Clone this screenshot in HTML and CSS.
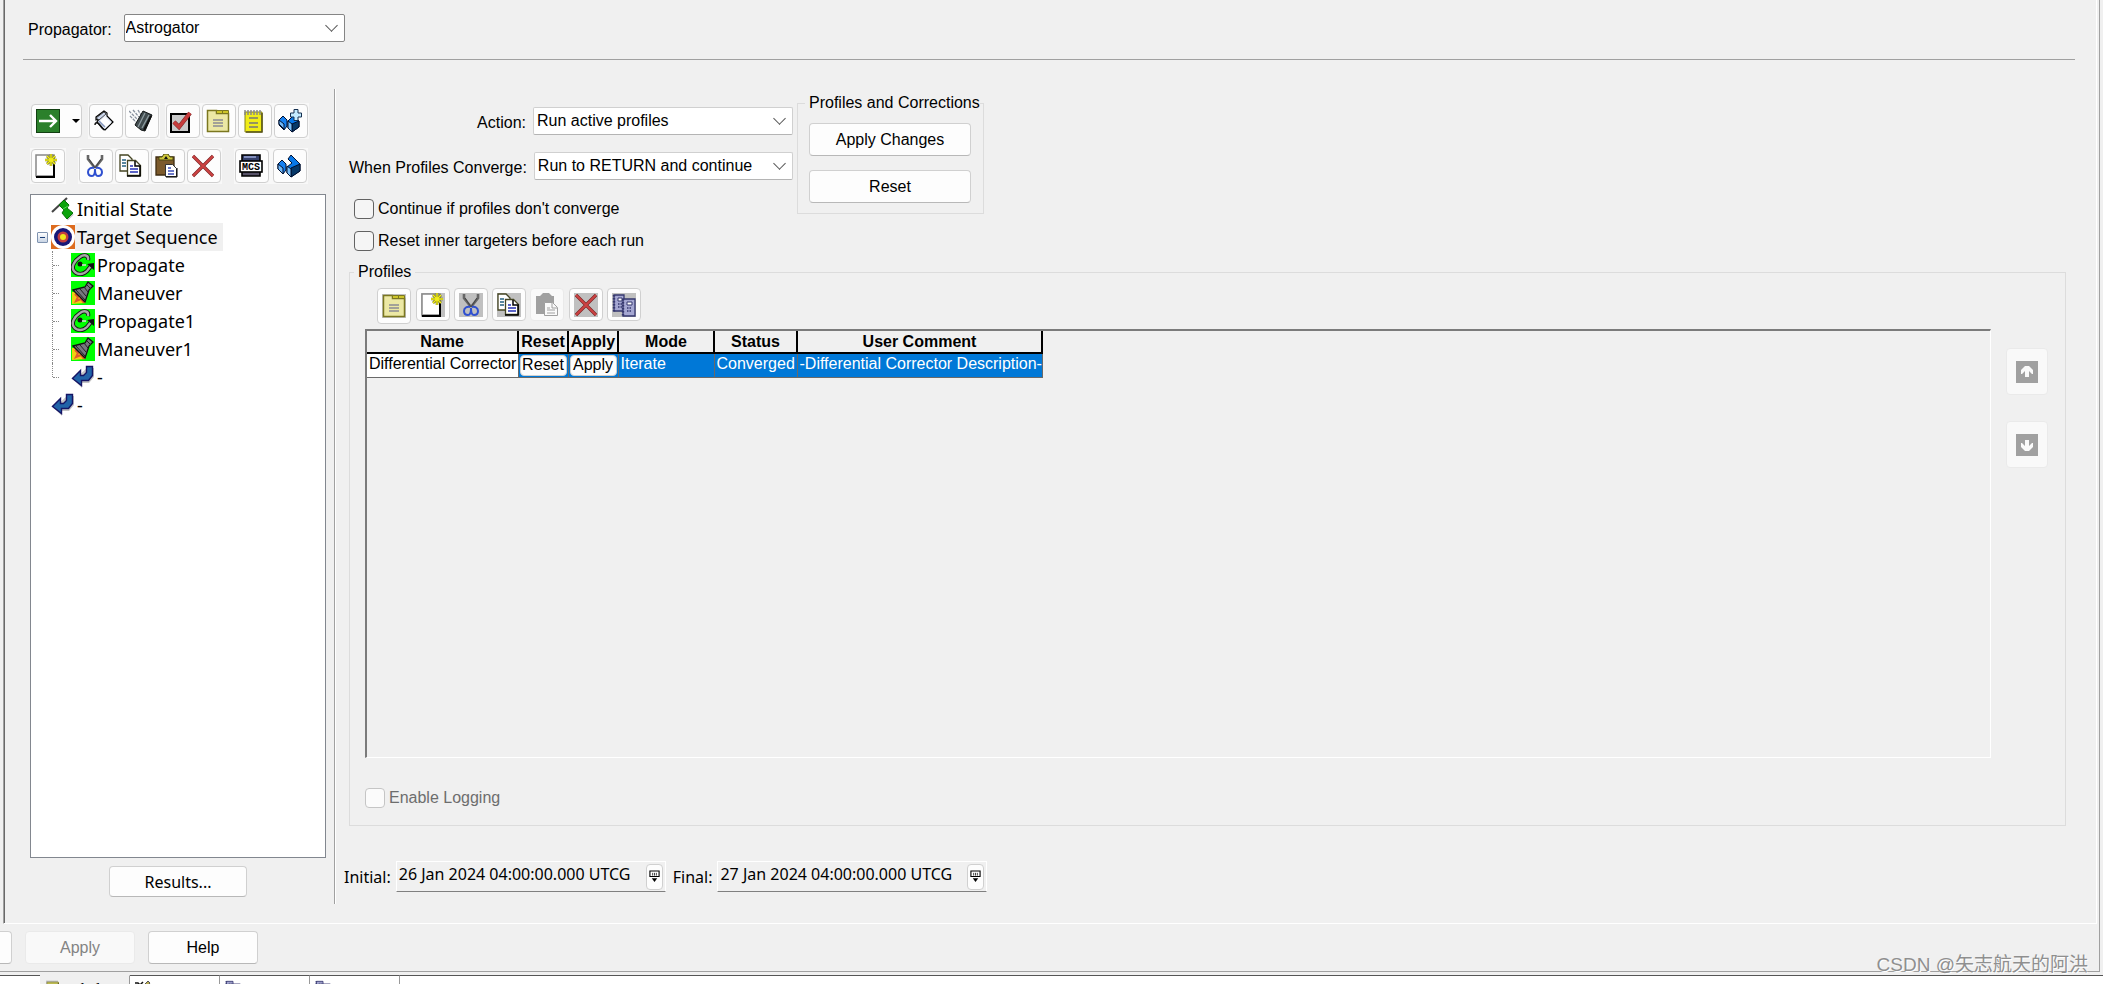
FILE: index.html
```html
<!DOCTYPE html>
<html lang="en">
<head>
  <meta charset="UTF-8">
  <meta name="viewport" content="width=device-width, initial-scale=1.0">
  <title>Satellite Properties - Astrogator</title>
  <link rel="stylesheet" href="styles.css">
</head>
<body>
  <!-- icons -->
  <svg class="defs" aria-hidden="true">
    <symbol id="i-run" viewBox="0 0 24 24">
      <rect x="0.5" y="0.5" width="23" height="23" fill="#2b802b" stroke="#123f12"/>
      <path d="M3 12h17M14 6l6 6-6 6" fill="none" stroke="#fff" stroke-width="2.4"/>
    </symbol>
    <symbol id="i-scroll" viewBox="0 0 24 24">
      <path d="M3 8l8-6 3 2v3l6 6-8 8-3-2-5-6 2-3-3 1z" fill="#e6ecf7" stroke="#000" stroke-width="1.2"/>
      <path d="M7 12l5-4 6 6-6 5z" fill="#fff"/>
      <path d="M3 9l8-6 2 2-7 6z" fill="#c9d4ea" stroke="#222" stroke-width="0.8"/>
      <path d="M6 12l6 6" stroke="#8294ba" stroke-width="1.5"/>
      <path d="M2 16c0-3 3-3 5 0l4 5" fill="none" stroke="#111" stroke-width="1.4"/>
    </symbol>
    <symbol id="i-flush" viewBox="0 0 24 24">
      <path d="M0 2l8 8M4 1l6 7M9 1l3 5M1 7l6 6" stroke="#8a93a0" stroke-width="1.3" stroke-dasharray="3 1"/>
      <path d="M14 2l9 4-7 16-4-1-6-5z" fill="#414b4e" stroke="#101414"/>
      <path d="M16 4L9 18M20 6l-7 13" stroke="#8d9b9f" stroke-width="1.3"/>
      <path d="M22 7l-7 14" stroke="#111" stroke-width="2"/>
    </symbol>
    <symbol id="i-check" viewBox="0 0 24 24">
      <rect x="1" y="5" width="18" height="18" fill="#c9c9c9" stroke="#000" stroke-width="2"/>
      <path d="M4 13l5 5L20 4" fill="none" stroke="#7c2a2a" stroke-width="4.4"/>
      <path d="M4 13l5 5L20 4" fill="none" stroke="#c73c3c" stroke-width="3.2"/>
    </symbol>
    <symbol id="i-tab" viewBox="0 0 24 24">
      <path d="M1.5 1.5h9v3h12v18h-21z" fill="#ece8a4" stroke="#7b7720" stroke-width="1.5"/>
      <path d="M10.5 1.5h6v3h-6zM16.5 1.5h6v3h-6z" fill="#cdc52a" stroke="#7b7720"/>
      <path d="M7 11h10M7 14h10M7 17h10" stroke="#8b8b94" stroke-width="1.3"/>
    </symbol>
    <symbol id="i-note" viewBox="0 0 24 24">
      <path d="M3 3h17v20H3z" fill="#f0ec18" stroke="#85821a"/>
      <path d="M20 4v19H4" fill="none" stroke="#55531a" stroke-width="1.5"/>
      <path d="M3 1v5M6 1v5M9 1v5M12 1v5M15 1v5M18 1v5" stroke="#888" stroke-width="1.5"/>
      <path d="M7 9h9M7 14h9M7 18h9" stroke="#777" stroke-width="1.5"/>
    </symbol>
    <symbol id="i-cubes" viewBox="0 0 24 24">
      <path d="M1 10l4-4 4 4v6l-3 4-5-5z" fill="#1680f0" stroke="#001030"/>
      <path d="M1 10l5 4v6l-5-5z" fill="#70b8f8" stroke="#001030"/>
      <path d="M14 1l9 9v7l-9 6-4-4v-6l5-4-4-4z" fill="#0878e8" stroke="#001030"/>
      <path d="M14 14l9-4v7l-9 6z" fill="#063868" stroke="#001030"/>
      <path d="M10 12l4 3v8l-4-4z" fill="#78bef8" stroke="#001030"/>
    </symbol>
    <symbol id="i-cubes-add" viewBox="0 0 24 24">
      <path d="M1 11l4-4 4 4v6l-3 4-5-5z" fill="#1680f0" stroke="#001030"/>
      <path d="M1 11l5 4v5l-5-5z" fill="#70b8f8" stroke="#001030"/>
      <path d="M10 12l5-5 6 5v6l-7 5-4-4z" fill="#0878e8" stroke="#001030"/>
      <path d="M14 15l7-3v6l-7 5z" fill="#063868" stroke="#001030"/>
      <path d="M10 12l4 3v8l-4-4z" fill="#78bef8" stroke="#001030"/>
      <path d="M16 0.5h4v3.500h3.500v4H20v3.500h-4V8h-3.500V4H16z" fill="#c4ecff" stroke="#153050"/>
    </symbol>
    <symbol id="i-new" viewBox="0 0 24 24">
      <path d="M1 1h18v21H1z" fill="#fff" stroke="#888" stroke-width="1.5"/>
      <path d="M19 8v15H1" fill="none" stroke="#000" stroke-width="2"/>
      <path d="M16 0v12M10 6h12M12 2l8 8M20 2l-8 8" stroke="#77751a" stroke-width="2.6"/>
      <path d="M16 0v12M10 6h12M12 2l8 8M20 2l-8 8" stroke="#f2ee1a" stroke-width="1.4"/>
    </symbol>
    <symbol id="i-cut" viewBox="0 0 24 24">
      <path d="M5 1v4l7 9M19 1v4l-7 9" fill="none" stroke="#666" stroke-width="2.6"/>
      <path d="M6 5l6 9M18 5l-6 9" stroke="#444"/>
      <path d="M11 14c-3-1-6 1-6 4s2 4 4 4 3-3 3-7c0 4 1 7 3 7s4-1 4-4-3-5-6-4" fill="none" stroke="#2f50d0" stroke-width="2"/>
    </symbol>
    <symbol id="i-copy" viewBox="0 0 24 24">
      <path d="M1 1h8l4 4v12H1z" fill="#fff" stroke="#444422" stroke-width="1.3"/>
      <path d="M3 6h4M3 9h4M3 12h4" stroke="#256080" stroke-width="1.3"/>
      <path d="M8.5 6.5h8l5 5v10h-13z" fill="#fff" stroke="#444422" stroke-width="1.3"/>
      <path d="M16 7v5h5v10H8" fill="none" stroke="#000" stroke-width="1.5"/>
      <path d="M11 12h3M11 15h8M11 18h8" stroke="#2431b4" stroke-width="1.3"/>
    </symbol>
    <symbol id="i-paste" viewBox="0 0 24 24">
      <path d="M1 3h18v18H1z" fill="#7c5a2c" stroke="#3f2d12" stroke-width="1.3"/>
      <path d="M4 6V3h3l2-3h4l2 3h3v3z" fill="#cfc83c" stroke="#4a4712"/>
      <path d="M9 5h4l-2-3z" fill="#111"/>
      <path d="M10.5 10.5h7l4 4v8h-11z" fill="#fff" stroke="#333"/>
      <path d="M22 14v9H11" fill="none" stroke="#000"/>
      <path d="M13 14h3M13 17h6M13 20h6" stroke="#3c4db8" stroke-width="1.3"/>
    </symbol>
    <symbol id="i-paste-off" viewBox="0 0 24 24">
      <path d="M1 3h4l3-3h6l3 3h2v18H1z" fill="#a0a0a0"/>
      <path d="M9.5 9.500h8l5 5v8h-13z" fill="#fafafa" stroke="#a0a0a0"/>
      <path d="M17 10v5h5M12 15h3M12 17h8M12 20h8" fill="none" stroke="#a0a0a0"/>
    </symbol>
    <symbol id="i-del" viewBox="0 0 24 24">
      <path d="M2 2l20 20M22 2L2 22" stroke="#722" stroke-width="3.2"/>
      <path d="M2 2l20 20M22 2L2 22" stroke="#cc4343" stroke-width="2.2"/>
    </symbol>
    <symbol id="i-mcs" viewBox="0 0 24 24">
      <path d="M3 1h18v7H3z" fill="#35406c" stroke="#000" stroke-width="1.6"/>
      <path d="M5 3h12" stroke="#9ba8d8" stroke-width="1.5"/>
      <path d="M3 17h18v5H3z" fill="#555066" stroke="#000" stroke-width="1.6"/>
      <rect x="1" y="7" width="22" height="11" fill="#fff" stroke="#000" stroke-width="1.6"/>
      <text x="12" y="16" text-anchor="middle" font-family="Liberation Mono, monospace" font-weight="700" font-size="10" fill="#000">MCS</text>
    </symbol>
    <symbol id="i-props" viewBox="0 0 24 24">
      <path d="M2 2h10v16H2z" fill="#a5a7d2" stroke="#35376e" stroke-width="1.3"/>
      <path d="M11 6h12v17H11z" fill="#a5a7d2" stroke="#35376e" stroke-width="1.3"/>
      <path d="M2 2v17M11 6v17" stroke="#35376e" stroke-width="2.4" stroke-dasharray="1.5 1.5"/>
      <path d="M6 5h4v3H6zM15 9h5v3h-5z" fill="#fff" stroke="#35376e"/>
      <path d="M6 11h5M6 14h5M15 15h5M15 18h5" stroke="#35376e" stroke-width="1.5" stroke-dasharray="1.5 1"/>
    </symbol>
    <symbol id="i-up" viewBox="0 0 22 22">
      <path d="M0 0h22v22H0z" fill="#a0a0a0"/>
      <path d="M9 16v-6l-3 3H5V9l4-4h4l4 4v4h-1l-3-3v6z" fill="#fafafa"/>
    </symbol>
    <symbol id="i-down" viewBox="0 0 22 22">
      <path d="M0 0h22v22H0z" fill="#a0a0a0"/>
      <path d="M9 6v6L6 9H5v4l4 4h4l4-4V9h-1l-3 3V6z" fill="#fafafa"/>
    </symbol>
    <symbol id="i-flag" viewBox="0 0 24 24">
      <path d="M12 14l5 8 5-5" fill="none" stroke="#c8c8c8" stroke-width="2"/>
      <path d="M1 15L16 1" stroke="#444" stroke-width="2"/>
      <path d="M8 8l5-5 5 5-2 3 6 5-6 6-5-6 2-3z" fill="#0ba30b" stroke="#057005"/>
      <path d="M12 12l5-3" stroke="#4fdc4f"/>
    </symbol>
    <symbol id="i-target" viewBox="0 0 24 24">
      <path d="M0 0h24v24H0z" fill="#dd6b1e"/>
      <circle cx="12" cy="12" r="12" fill="#fff"/>
      <circle cx="12" cy="12" r="9" fill="#171777"/>
      <circle cx="12" cy="12" r="5.5" fill="#c43e3e"/>
      <circle cx="12" cy="12" r="3" fill="#f0e51c"/>
    </symbol>
    <symbol id="i-prop" viewBox="0 0 24 24">
      <path d="M0 0h24v24H0z" fill="#0f0"/>
      <path d="M17 7c1-5-4-6-8-3-6 4-9 10-6 14s9 4 13 0l4-5" fill="none" stroke="#111" stroke-width="4.2"/>
      <path d="M17 7c1-5-4-6-8-3-6 4-9 10-6 14s9 4 13 0l4-5" fill="none" stroke="#a8a8a8" stroke-width="2.4"/>
      <path d="M16 11l7-1v7z" fill="#111"/>
      <circle cx="9" cy="11" r="2.5" fill="#111"/>
      <path d="M11 12h4" stroke="#ddd" stroke-width="1.5"/>
    </symbol>
    <symbol id="i-man" viewBox="0 0 24 24">
      <path d="M0 0h24v24H0z" fill="#0f0"/>
      <path d="M1 11h5l9 11-14 1z" fill="#f0cf10"/>
      <path d="M4 13l3 3-2 4 5-2 3 4" fill="none" stroke="#e2592b" stroke-width="2"/>
      <path d="M2 9l12-3 3-5 5 4-4 4-4 12z" fill="#77777f" stroke="#111" stroke-width="1.3"/>
      <path d="M5 9l9 10M9 8l6 7M13 6l4 5M16 4l4 4" stroke="#222"/>
    </symbol>
    <symbol id="i-ret" viewBox="0 0 24 24">
      <path d="M16 3h7v9l-5 6h-7v5l-8-8" fill="#c4c4c4"/>
      <path d="M15.5 1.5h6v9l-4 5h-7v5l-9-7 8-8v5h3l3-3z" fill="#2063a8" stroke="#151565" stroke-width="1.4"/>
    </symbol>
    <symbol id="i-cal" viewBox="0 0 12 14">
      <path d="M1 1h10v6H1z" fill="#fff" stroke="#000" stroke-width="1.2"/>
      <path d="M4 3v3M6 3v3M8 3v3" stroke="#000" stroke-width="0.8"/>
      <path d="M3 9h6l-3 4z" fill="#000"/>
    </symbol>
    <symbol id="i-sat" viewBox="0 0 16 16">
      <path d="M0 3h3l4 4M3 7l5-5" fill="none" stroke="#111" stroke-width="1.5"/>
      <path d="M8 6l5-5 2 2-5 6z" fill="#b8ab50" stroke="#555"/>
    </symbol>
  </svg>

  <div class="dialog">
    <main class="page">
      <div class="prop-bar">
        <label for="propagator">Propagator:</label>
        <span class="combo combo-dark"><select id="propagator"><option>Astrogator</option></select></span>
      </div>

      <div class="columns">
        <!-- mission control sequence -->
        <section class="sidebar">
          <div class="toolbar">
            <button class="tool run" aria-label="Run"><svg><use href="#i-run"/></svg><i class="caret"></i></button>
            <div class="group">
              <button class="tool" aria-label="Summary"><svg><use href="#i-scroll"/></svg></button>
              <button class="tool" aria-label="Clear graphics"><svg><use href="#i-flush"/></svg></button>
            </div>
            <div class="group">
              <button class="tool" aria-label="Options"><svg><use href="#i-check"/></svg></button>
              <button class="tool" aria-label="Properties"><svg><use href="#i-tab"/></svg></button>
              <button class="tool" aria-label="Notes"><svg><use href="#i-note"/></svg></button>
              <button class="tool" aria-label="Add component"><svg><use href="#i-cubes-add"/></svg></button>
            </div>
          </div>
          <div class="toolbar toolbar-edit">
            <div class="group">
              <button class="tool" aria-label="New segment"><svg><use href="#i-new"/></svg></button>
            </div>
            <div class="group">
              <button class="tool" aria-label="Cut"><svg><use href="#i-cut"/></svg></button>
              <button class="tool" aria-label="Copy"><svg><use href="#i-copy"/></svg></button>
              <button class="tool" aria-label="Paste"><svg><use href="#i-paste"/></svg></button>
              <button class="tool" aria-label="Delete"><svg><use href="#i-del"/></svg></button>
            </div>
            <div class="group mcs">
              <button class="tool" aria-label="MCS options"><svg><use href="#i-mcs"/></svg></button>
              <button class="tool" aria-label="Component browser"><svg><use href="#i-cubes"/></svg></button>
            </div>
          </div>

          <ul class="tree">
            <li><div class="node"><svg><use href="#i-flag"/></svg><span>Initial State</span></div></li>
            <li>
              <div class="node on"><button class="toggle" aria-label="Collapse"></button><svg><use href="#i-target"/></svg><span>Target Sequence</span></div>
              <ul>
                <li><div class="node"><svg><use href="#i-prop"/></svg><span>Propagate</span></div></li>
                <li><div class="node"><svg><use href="#i-man"/></svg><span>Maneuver</span></div></li>
                <li><div class="node"><svg><use href="#i-prop"/></svg><span>Propagate1</span></div></li>
                <li><div class="node"><svg><use href="#i-man"/></svg><span>Maneuver1</span></div></li>
                <li><div class="node"><svg><use href="#i-ret"/></svg><span>-</span></div></li>
              </ul>
            </li>
            <li><div class="node"><svg><use href="#i-ret"/></svg><span>-</span></div></li>
          </ul>

          <button class="btn results">Results...</button>
        </section>

        <!-- target sequence settings -->
        <section class="settings">
          <div class="top">
            <div class="options">
              <div class="field">
                <label for="action">Action:</label>
                <span class="combo"><select id="action"><option>Run active profiles</option></select></span>
              </div>
              <div class="field">
                <label for="converge">When Profiles Converge:</label>
                <span class="combo"><select id="converge"><option>Run to RETURN and continue</option></select></span>
              </div>
              <label class="tick"><input type="checkbox">Continue if profiles don't converge</label>
              <label class="tick"><input type="checkbox">Reset inner targeters before each run</label>
            </div>
            <fieldset class="corrections">
              <legend>Profiles and Corrections</legend>
              <button class="btn">Apply Changes</button>
              <button class="btn">Reset</button>
            </fieldset>
          </div>

          <fieldset class="profiles">
            <legend>Profiles</legend>
            <div class="toolbar toolbar-profiles">
              <button class="tool tall" aria-label="Properties"><svg><use href="#i-tab"/></svg></button>
              <button class="tool" aria-label="New"><svg><use href="#i-new"/></svg></button>
              <button class="tool" aria-label="Cut"><svg><use href="#i-cut"/></svg></button>
              <button class="tool" aria-label="Copy"><svg><use href="#i-copy"/></svg></button>
              <button class="tool" aria-label="Paste" disabled><svg><use href="#i-paste-off"/></svg></button>
              <button class="tool" aria-label="Delete"><svg><use href="#i-del"/></svg></button>
              <button class="tool" aria-label="User comments"><svg><use href="#i-props"/></svg></button>
            </div>
            <div class="profile-row">
              <div class="well">
                <table>
                  <colgroup><col class="c-name"><col class="c-btn"><col class="c-btn"><col class="c-mode"><col class="c-status"><col class="c-comment"></colgroup>
                  <thead>
                    <tr><th>Name</th><th>Reset</th><th>Apply</th><th>Mode</th><th>Status</th><th>User Comment</th></tr>
                  </thead>
                  <tbody>
                    <tr><td class="name">Differential Corrector</td><td class="act"><button>Reset</button></td><td class="act"><button>Apply</button></td><td>Iterate</td><td>Converged</td><td>-Differential Corrector Description-</td></tr>
                  </tbody>
                </table>
              </div>
              <div class="movers">
                <button aria-label="Move up" disabled><svg><use href="#i-up"/></svg></button>
                <button aria-label="Move down" disabled><svg><use href="#i-down"/></svg></button>
              </div>
            </div>
            <label class="tick off"><input type="checkbox" disabled>Enable Logging</label>
          </fieldset>

          <div class="times">
            <label for="initial">Initial:</label>
            <span class="date"><input id="initial" type="text" value="26 Jan 2024 04:00:00.000 UTCG"><button aria-label="Initial time menu"><svg><use href="#i-cal"/></svg></button></span>
            <label for="final">Final:</label>
            <span class="date"><input id="final" type="text" value="27 Jan 2024 04:00:00.000 UTCG"><button aria-label="Final time menu"><svg><use href="#i-cal"/></svg></button></span>
          </div>
        </section>
      </div>
    </main>

    <div class="actions">
      <button class="btn ok" aria-label="Cancel"></button>
      <button class="btn" disabled>Apply</button>
      <button class="btn">Help</button>
    </div>
    <div class="watermark">CSDN @矢志航天的阿洪</div>
  </div>

  <!-- window tabs, cut off by the bottom edge -->
  <nav class="tabs">
    <a href="#" class="edge" aria-label="Previous"></a>
    <a href="#" class="on"><svg><use href="#i-note"/></svg>Label</a>
    <a href="#"><svg><use href="#i-sat"/></svg>Prop</a>
    <a href="#"><svg><use href="#i-props"/></svg>Prop</a>
    <a href="#"><svg><use href="#i-props"/></svg>Prop</a>
  </nav>
</body>
</html>
```
FILE: styles.css
```css
* {
  margin: 0;
  padding: 0;
  box-sizing: border-box;
}
body {
  display: flex;
  flex-direction: column;
  height: 100vh;
  overflow: hidden;
  background: #f0f0f0;
  color: #000;
  font: 16px/20px "Liberation Sans", Arial, "Noto Sans CJK SC", sans-serif;
}
ul {
  list-style: none;
}
button, select, input {
  font: inherit;
  color: inherit;
}
svg {
  display: block;
  flex: none;
  width: 24px;
  height: 24px;
}
.defs {
  position: absolute;
  width: 0;
  height: 0;
}

/* dialog frame */
.dialog {
  position: relative;
  flex: 1;
  display: flex;
  flex-direction: column;
  margin-right: 3px;
  border-right: 1px solid #a0a0a0;
  border-bottom: 1px solid #a0a0a0;
}
.page {
  flex: 1;
  display: flex;
  flex-direction: column;
  margin: 0 2px 0 3px;
  padding-left: 1px;
  border-left: 1px solid #a0a0a0;
  border-right: 1px solid #fff;
  border-bottom: 1px solid #fff;
  box-shadow: inset 1px 0 #696969;
}

.prop-bar {
  display: flex;
  align-items: center;
  gap: 12px;
  height: 60px;
  margin: 0 21px 0 18px;
  padding: 0 0 3px 5px;
  border-bottom: 1px solid #a0a0a0;
}
.prop-bar label, .field label {
  padding-top: 3px;
  white-space: nowrap;
}

/* drop-downs */
.combo {
  position: relative;
  display: block;
  width: 260px;
}
.combo select {
  display: block;
  width: 100%;
  height: 28px;
  padding: 0 0 1px 3px;
  appearance: none;
  background: #fff;
  border: 1px solid #d0d0d0;
  border-bottom-color: #b4b4b4;
  border-radius: 2px;
}
.combo::after {
  content: "";
  position: absolute;
  right: 9px;
  top: 7px;
  width: 8px;
  height: 8px;
  border: solid #555;
  border-width: 0 1px 1px 0;
  transform: rotate(45deg);
}
.combo-dark {
  width: 221px;
}
.combo-dark select {
  padding-left: 1px;
  border-color: #858585;
}

/* push buttons */
.btn {
  height: 33px;
  background: #fdfdfd;
  border: 1px solid #d0d0d0;
  border-bottom-color: #b8b8b8;
  border-radius: 4px;
}
.btn:disabled {
  background: #f9f9f9;
  border-color: #eaeaea;
  color: #838383;
}

.columns {
  flex: 1;
  display: flex;
  margin: 29px 21px 19px 25px;
}

/* sidebar */
.sidebar {
  display: flex;
  flex-direction: column;
  width: 305px;
  padding: 15px 8px 0 0;
  border-right: 1px solid #a0a0a0;
  box-shadow: 1px 0 #fff;
}
.toolbar {
  display: flex;
  gap: 7px;
  margin: 0 0 11px 1px;
}
.toolbar-edit {
  gap: 14px;
}
.group {
  display: flex;
  gap: 2px;
  background: #f8f8f8;
  box-shadow: 0 0 0 1px #f8f8f8;
}
.mcs {
  gap: 4px;
}
.tool {
  display: flex;
  align-items: center;
  justify-content: center;
  width: 34px;
  height: 34px;
  padding-right: 2px;
  background: #fdfdfd;
  border: 1px solid #d0d0d0;
  border-radius: 4px;
}
.run {
  gap: 12px;
  width: 51px;
  padding: 0 0 0 3px;
}
.caret {
  border: solid transparent;
  border-width: 4px 4px 0;
  border-top-color: #000;
}

/* segment tree */
.tree {
  flex: 1;
  background: #fff;
  border: 1px solid #82878f;
  font: 18px/28px "Noto Sans", "Open Sans", sans-serif;
}
.node {
  position: relative;
  display: flex;
  align-items: center;
  height: 28px;
  padding-left: 20px;
}
.node span {
  padding: 0 5px 0 2px;
}
.node.on span {
  background: #f0f0f0;
}
.toggle {
  position: absolute;
  left: 6px;
  top: 9px;
  width: 11px;
  height: 11px;
  background: linear-gradient(#fff, #c8d4e4);
  border: 1px solid #7f93b0;
  border-radius: 1px;
}
.toggle::before {
  content: "";
  position: absolute;
  left: 2px;
  top: 4px;
  width: 5px;
  height: 1px;
  background: #1c3f78;
}
.tree ul {
  margin-left: 20px;
}
.tree ul .node::before {
  content: "";
  position: absolute;
  left: 1px;
  top: 0;
  height: 100%;
  border-left: 1px dotted #888;
}
.tree ul li:last-child .node::before {
  height: 50%;
}
.tree ul .node::after {
  content: "";
  position: absolute;
  left: 2px;
  top: 14px;
  width: 6px;
  border-top: 1px dotted #888;
}
.results {
  align-self: center;
  width: 138px;
  height: 31px;
  margin: 8px 0 7px;
  font-family: "Noto Sans", sans-serif;
}

/* settings */
.settings {
  flex: 1;
  display: flex;
  flex-direction: column;
  padding: 4px 9px 12px 14px;
}
.top {
  display: flex;
  gap: 4px;
}
.options {
  width: 444px;
  padding-top: 14px;
}
.field {
  display: flex;
  align-items: center;
  justify-content: flex-end;
  gap: 7px;
  margin-bottom: 17px;
}
.tick {
  display: flex;
  align-items: center;
  gap: 4px;
  height: 20px;
  margin: 0 0 12px 5px;
}
.field + .tick {
  margin-top: 19px;
}
.tick input {
  width: 20px;
  height: 20px;
  appearance: none;
  background: #f5f5f5;
  border: 1px solid #626262;
  border-radius: 4px;
}
.tick.off {
  margin: 0 0 0 15px;
  color: #6d6d6d;
}
.tick.off input {
  background: #fbfbfb;
  border-color: #c5c5c5;
}

fieldset {
  min-width: 0;
  border: 1px solid #dcdcdc;
}
legend {
  padding: 0 4px;
}
.corrections {
  display: flex;
  flex-direction: column;
  gap: 14px;
  width: 187px;
  height: 121px;
  padding: 10px 11px;
}
.corrections legend {
  margin-left: -4px;
  padding: 0 0 0 4px;
  white-space: nowrap;
}
.corrections .btn {
  width: 162px;
}

/* profiles */
.profiles {
  flex: 1;
  display: flex;
  flex-direction: column;
  margin-top: -1px;
  padding-bottom: 17px;
}
.profiles legend {
  margin-left: 4px;
}
.toolbar-profiles {
  align-items: flex-start;
  gap: 4px;
  margin: 6px 0 5px 27px;
}
.toolbar-profiles .tool {
  height: 33px;
  padding-right: 0;
}
.toolbar-profiles .tool svg {
  background: #c0c0c0;
}
.toolbar-profiles .tall {
  height: 36px;
  margin-right: 1px;
}
.toolbar-profiles .tool:disabled {
  margin-right: 1px;
  background: #f9f9f9;
  border-color: #eaeaea;
}
.toolbar-profiles .tool:disabled svg {
  background: none;
}
.profile-row {
  flex: 1;
  display: flex;
  gap: 15px;
  margin: 0 17px 30px 15px;
}
.well {
  flex: 1;
  border: 1px solid #fff;
  border-top: 2px solid #7b7b7b;
  border-left: 2px solid #7b7b7b;
}
table {
  width: 675px;
  table-layout: fixed;
  border-collapse: collapse;
}
.c-name { width: 151px; }
.c-btn { width: 50px; }
.c-mode { width: 96px; }
.c-status { width: 83px; }
.c-comment { width: 245px; }
th {
  height: 22px;
  border: solid #000;
  border-width: 0 2px 2px 0;
  font-weight: bold;
  line-height: 20px;
  white-space: nowrap;
}
td {
  height: 24px;
  padding: 0 0 3px 2px;
  background: #0078d7;
  border: 1px solid #696969;
  border-left-width: 0;
  color: #fff;
  line-height: 18px;
  white-space: nowrap;
}
td.name {
  background: #fff;
  color: #000;
}
td.act {
  padding: 0 1px;
}
td.act button {
  display: block;
  width: 100%;
  height: 21px;
  background: #fdfdfd;
  border: 1px solid #d0d0d0;
  border-radius: 4px;
  color: #000;
  line-height: 18px;
}
.movers {
  display: flex;
  flex-direction: column;
  gap: 26px;
  padding-top: 19px;
}
.movers button {
  display: flex;
  align-items: center;
  justify-content: center;
  width: 42px;
  height: 47px;
  background: #f9f9f9;
  border: 1px solid #eaeaea;
  border-radius: 4px;
}
.movers svg {
  width: 22px;
  height: 22px;
}

/* start / stop times */
.times {
  display: flex;
  align-items: center;
  gap: 5px;
  margin: 35px 0 0 -5px;
  font-family: "Noto Sans", sans-serif;
}
.date {
  display: flex;
  align-items: center;
  width: 270px;
  height: 31px;
  margin-right: 2px;
  padding: 0 2px;
  border: 1px solid #fff;
  border-bottom: 1px solid #808080;
}
.date input {
  flex: 1;
  min-width: 0;
  height: 28px;
  padding-bottom: 5px;
  background: none;
  border: 0;
}
.date button {
  display: flex;
  align-items: center;
  justify-content: center;
  width: 17px;
  height: 26px;
  background: #fdfdfd;
  border: 1px solid #d0d0d0;
  border-radius: 4px;
}
.date svg {
  width: 11px;
  height: 13px;
}

/* bottom buttons */
.actions {
  display: flex;
  gap: 13px;
  padding: 7px 0;
}
.actions .btn {
  width: 110px;
}
.actions .ok {
  width: 12px;
  border-left: 0;
  border-radius: 0 4px 4px 0;
}
.watermark {
  position: absolute;
  right: 11px;
  bottom: -6px;
  color: #8f8f8f;
  font-size: 19px;
  line-height: 24px;
  text-shadow: 1px 1px #fff;
}

.tabs {
  display: flex;
  height: 11px;
  overflow: hidden;
  margin-top: 1px;
  background: #fff;
  border-top: 2px solid #f0f0f0;
  font: 16px/20px "Liberation Serif", serif;
}
.tabs a {
  display: flex;
  gap: 3px;
  width: 90px;
  height: 24px;
  padding: 4px 0 0 5px;
  border-top: 1px solid #555;
  border-right: 1px solid #999;
  color: #000;
  text-decoration: none;
}
.tabs .edge {
  width: 40px;
  border-right: 0;
}
.tabs .on {
  background: #f0f0f0;
  border-top-color: #f0f0f0;
}
.tabs::after {
  content: "";
  flex: 1;
  border-top: 1px solid #555;
}
.tabs svg {
  width: 16px;
  height: 16px;
}
```
